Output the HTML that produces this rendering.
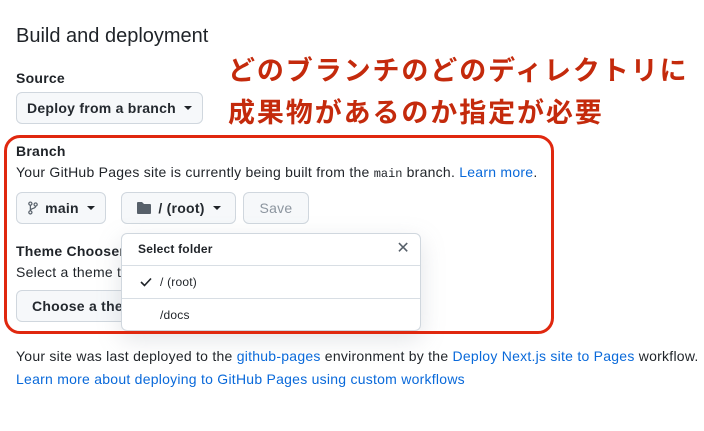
<!DOCTYPE html>
<html><head><meta charset="utf-8"><style>
body{margin:0;width:704px;height:431px;background:#fff;font-family:"Liberation Sans",Arial,sans-serif;color:#1f2328;position:relative;overflow:hidden;letter-spacing:0.25px}
.a{position:absolute;white-space:nowrap}
.btn{position:absolute;box-sizing:border-box;border:1px solid #d0d7de;border-radius:6px;background:#f6f8fa;font-size:14px;font-weight:bold;display:flex;align-items:center;justify-content:center;gap:6px;color:#24292f}
.car{display:inline-block;border-left:4px solid transparent;border-right:4px solid transparent;border-top:4px solid #1f2328;margin-left:2px}
a{color:#0969da;text-decoration:none}
.jp{position:absolute;left:228px;color:#c42a0c;font-weight:bold;font-size:27px;font-family:"Liberation Sans","Noto Sans CJK JP",sans-serif;letter-spacing:1.9px;white-space:nowrap}
</style></head><body>
<div class="a" style="left:16px;top:25px;font-size:20px;letter-spacing:0">Build and deployment</div>
<div class="a" style="left:16px;top:70px;font-size:14px;font-weight:bold">Source</div>
<div class="btn" style="left:16px;top:92px;width:187px;height:32px">Deploy from a branch<span class="car"></span></div>
<div class="jp" style="top:49px">どのブランチのどのディレクトリに</div>
<div class="jp" style="top:91px">成果物があるのか指定が必要</div>
<div class="a" style="left:16px;top:143px;font-size:14px;font-weight:bold">Branch</div>
<div class="a" style="left:16px;top:164px;font-size:14px">Your GitHub Pages site is currently being built from the <span style="font-family:'Liberation Mono',monospace;font-size:12px;letter-spacing:0">main</span> branch. <a>Learn more</a>.</div>
<div class="btn" style="left:16px;top:192px;width:90px;height:32px"><svg width="12" height="14" viewBox="0 0 12 16"><circle cx="3" cy="3" r="1.8" fill="none" stroke="#57606a" stroke-width="1.4"/><circle cx="3" cy="13" r="1.8" fill="none" stroke="#57606a" stroke-width="1.4"/><circle cx="9" cy="4" r="1.8" fill="none" stroke="#57606a" stroke-width="1.4"/><path d="M3 5v6M9 6c0 3-6 2-6 5" fill="none" stroke="#57606a" stroke-width="1.4"/></svg>main<span class="car"></span></div>
<div class="btn" style="left:121px;top:192px;width:115px;height:32px"><svg width="16" height="14" viewBox="0 0 16 14"><path d="M1 2a1 1 0 0 1 1-1h4l2 2h6a1 1 0 0 1 1 1v8a1 1 0 0 1-1 1H2a1 1 0 0 1-1-1z" fill="#57606a"/></svg>/ (root)<span class="car"></span></div>
<div class="btn" style="left:243px;top:192px;width:66px;height:32px;color:#8c959f;font-weight:normal">Save</div>
<div class="a" style="left:16px;top:243px;font-size:14px;font-weight:bold">Theme Chooser</div>
<div class="a" style="left:16px;top:264px;font-size:14px">Select a theme to apply to your site. <a>Learn more</a>.</div>
<div class="btn" style="left:16px;top:290px;width:160px;height:32px;justify-content:flex-start;padding-left:15px">Choose a theme</div>
<div style="position:absolute;left:121px;top:233px;width:300px;height:98px;background:#fff;border:1px solid #d0d7de;border-radius:6px;box-shadow:0 8px 24px rgba(140,149,159,.25);box-sizing:border-box;font-size:12px;letter-spacing:0.2px">
<div class="a" style="left:16px;top:8px;font-weight:bold">Select folder</div>
<div class="a" style="right:10px;top:4px;font-size:16px;color:#57606a">✕</div>
<div style="position:absolute;left:0;right:0;top:31px;border-top:1px solid #d8dee4"></div>
<svg style="position:absolute;left:18px;top:43px" width="12" height="10" viewBox="0 0 12 10"><path d="M1 5l3.5 3.5L11 1.5" fill="none" stroke="#1f2328" stroke-width="1.6"/></svg>
<div class="a" style="left:38px;top:41px">/ (root)</div>
<div style="position:absolute;left:0;right:0;top:64px;border-top:1px solid #d8dee4"></div>
<div class="a" style="left:38px;top:74px">/docs</div>
</div>
<div style="position:absolute;left:4px;top:135px;width:550px;height:199px;border:3px solid #e0280f;border-radius:16px;box-sizing:border-box"></div>
<div class="a" style="left:16px;top:348px;font-size:14px">Your site was last deployed to the <a>github-pages</a> environment by the <a>Deploy Next.js site to Pages</a> workflow.</div>
<div class="a" style="left:16px;top:371px;font-size:14px"><a>Learn more about deploying to GitHub Pages using custom workflows</a></div>
</body></html>
